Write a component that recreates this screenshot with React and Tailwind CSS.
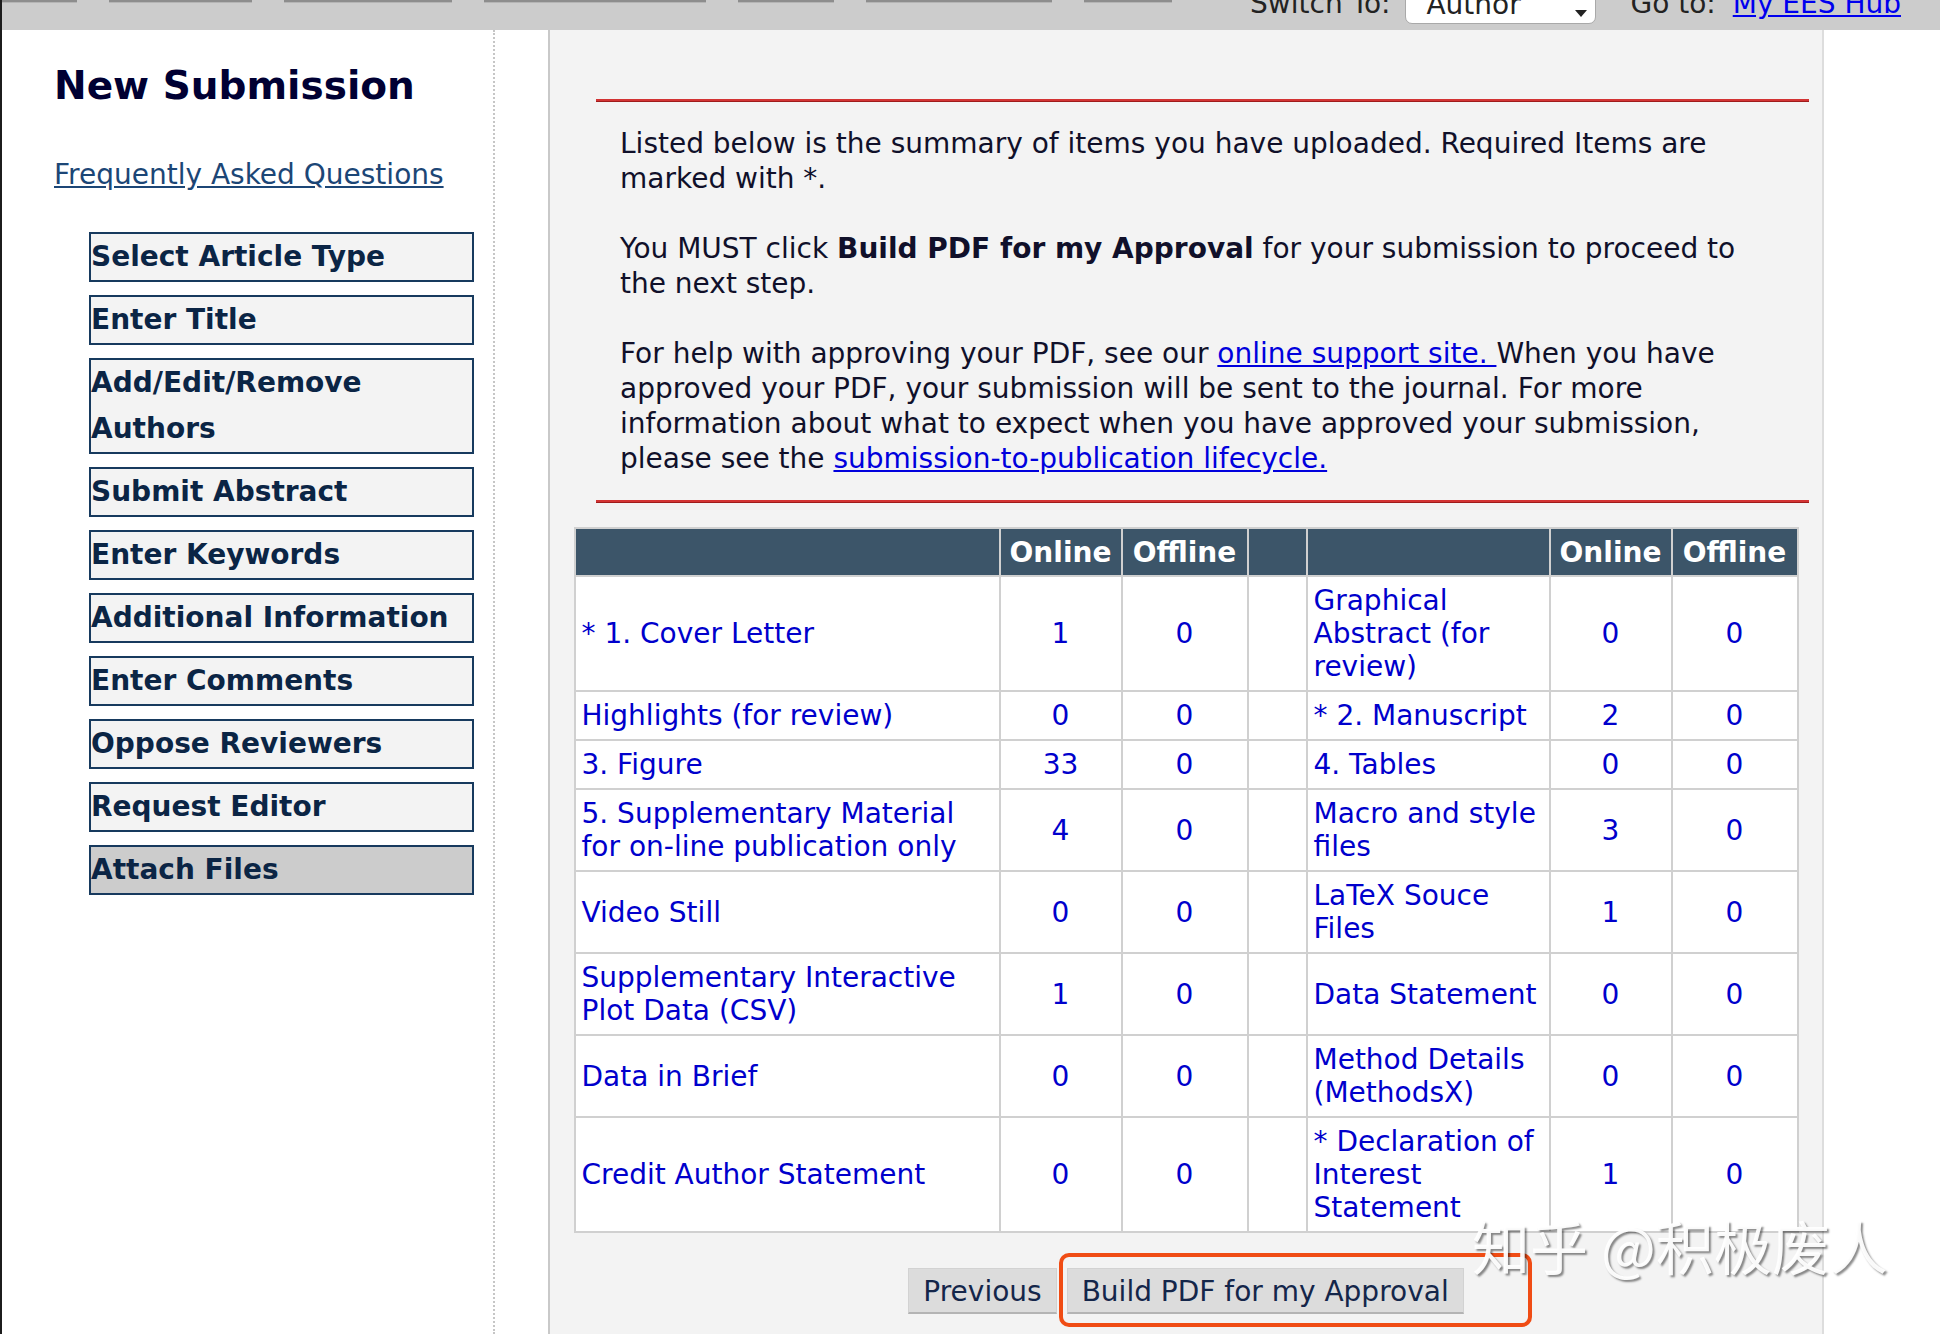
import React from 'react';

const tabWidths = ['w-[75px]', 'w-[143px]', 'w-[168px]', 'w-[222px]', 'w-[96px]', 'w-[186px]', 'w-[88px]'];

const steps = [
  'Select Article Type',
  'Enter Title',
  'Add/Edit/Remove Authors',
  'Submit Abstract',
  'Enter Keywords',
  'Additional Information',
  'Enter Comments',
  'Oppose Reviewers',
  'Request Editor',
  'Attach Files',
];

// left item, online, offline, right item, online, offline
const rows = [
  ['* 1. Cover Letter', 1, 0, 'Graphical Abstract (for review)', 0, 0],
  ['Highlights (for review)', 0, 0, '* 2. Manuscript', 2, 0],
  ['3. Figure', 33, 0, '4. Tables', 0, 0],
  ['5. Supplementary Material for on-line publication only', 4, 0, 'Macro and style files', 3, 0],
  ['Video Still', 0, 0, 'LaTeX Souce Files', 1, 0],
  ['Supplementary Interactive Plot Data (CSV)', 1, 0, 'Data Statement', 0, 0],
  ['Data in Brief', 0, 0, 'Method Details (MethodsX)', 0, 0],
  ['Credit Author Statement', 0, 0, '* Declaration of Interest Statement', 1, 0],
];

const TopBar = () => (
  <div className="flex h-[30px] overflow-hidden bg-[#cccccc] text-[28px] leading-[35px]">
    <div className="flex gap-[32px]">
      {tabWidths.map((w, i) => (
        <div key={i} className={`${w} h-[3px] border-b border-[#b5b5b5] bg-[#8d8d8d]`} />
      ))}
    </div>
    <div className="ml-auto mr-[39px] -mt-[14px] flex items-start text-[#222]">
      <span>Switch To:</span>
      <div className="ml-[15px] flex h-[38px] w-[191px] items-start justify-between rounded-b-[7px] border border-[#a9a9a9] bg-white pl-[20px] pr-[7px]">
        <span>Author</span>
        <svg className="mt-[22px]" width="14" height="9" viewBox="0 0 14 9">
          <polygon points="1,1 13,1 7,8" fill="#222" />
        </svg>
      </div>
      <span className="ml-[34px]">Go to:</span>
      <a className="ml-[17px] text-[#0000ee] underline">My EES Hub</a>
    </div>
  </div>
);

const Sidebar = () => (
  <aside className="w-[493px] shrink-0 border-r-2 border-dotted border-[#c6c6c6] pl-[52px] pt-[32px]">
    <h1 className="text-[39px] font-bold leading-[47px] text-[#000033]">New Submission</h1>
    <a className="mt-[48px] block text-[28px] leading-[35px] text-[#1c4676] underline">Frequently Asked Questions</a>
    <div className="ml-[35px] mt-[40px] flex w-[385px] flex-col gap-[13px]">
      {steps.map(step => (
        <div
          key={step}
          className={`border-2 border-[#173a5e] text-[28px] font-bold leading-[46px] text-[#0b2545] ${
            step === 'Attach Files' ? 'bg-[#cccccc]' : 'bg-[#f3f3f3]'
          }`}
        >
          {step}
        </div>
      ))}
    </div>
  </aside>
);

const RedLine = ({ className = '' }) => (
  <div className={`h-[3px] border-b border-[#9f1b1b] bg-[#d23333] ${className}`} />
);

const FilesTable = () => (
  <table className="mx-auto mt-[24px] w-[1223px] table-fixed border-collapse text-[28px] leading-[33px]">
    <colgroup>
      <col className="w-[425px]" />
      <col className="w-[122px]" />
      <col className="w-[126px]" />
      <col className="w-[59px]" />
      <col className="w-[243px]" />
      <col className="w-[122px]" />
      <col className="w-[126px]" />
    </colgroup>
    <thead>
      <tr className="bg-[#3c5569] font-bold text-white">
        <th className="border-2 border-[#d0d0d0] pb-[6px] pt-[7px]" />
        <th className="border-2 border-[#d0d0d0] pb-[6px] pt-[7px]">Online</th>
        <th className="border-2 border-[#d0d0d0] pb-[6px] pt-[7px]">Offline</th>
        <th className="border-2 border-[#d0d0d0] pb-[6px] pt-[7px]" />
        <th className="border-2 border-[#d0d0d0] pb-[6px] pt-[7px]" />
        <th className="border-2 border-[#d0d0d0] pb-[6px] pt-[7px]">Online</th>
        <th className="border-2 border-[#d0d0d0] pb-[6px] pt-[7px]">Offline</th>
      </tr>
    </thead>
    <tbody className="bg-white text-[#0000cc]">
      {rows.map(([left, lOn, lOff, right, rOn, rOff]) => (
        <tr key={left}>
          <td className="border-2 border-[#d0d0d0] px-[6px] py-[7px]">{left}</td>
          <td className="border-2 border-[#d0d0d0] py-[7px] text-center">{lOn}</td>
          <td className="border-2 border-[#d0d0d0] py-[7px] text-center">{lOff}</td>
          <td className="border-2 border-[#d0d0d0]" />
          <td className="border-2 border-[#d0d0d0] px-[6px] py-[7px]">{right}</td>
          <td className="border-2 border-[#d0d0d0] py-[7px] text-center">{rOn}</td>
          <td className="border-2 border-[#d0d0d0] py-[7px] text-center">{rOff}</td>
        </tr>
      ))}
    </tbody>
  </table>
);

const App = () => {
  return (
    <div className="relative h-[1334px] overflow-hidden border-l-2 border-[#1c1c1c] bg-white font-['DejaVu_Sans','Noto_Sans_CJK_SC',sans-serif]">
      <TopBar />
      <div className="flex h-[1304px]">
        <Sidebar />
        <main className="ml-[53px] w-[1276px] shrink-0 border-x-2 border-l-[#c9c9c9] border-r-[#dddddd] bg-[#f3f3f3] pt-[69px]">
          <div className="ml-[46px] mr-[13px]">
            <RedLine />
            <div className="mt-[24px] pl-[24px] pr-[49px] text-[28px] leading-[35px] text-[#10102a]">
              <p>Listed below is the summary of items you have uploaded. Required Items are marked with *.</p>
              <p className="mt-[35px]">
                You MUST click <b>Build PDF for my Approval</b> for your submission to proceed to the next step.
              </p>
              <p className="mt-[35px]">
                For help with approving your PDF, see our{' '}
                <a className="text-[#0000dd] underline">online support site. </a>
                When you have approved your PDF, your submission will be sent to the journal. For more information
                about what to expect when you have approved your submission, please see the{' '}
                <a className="text-[#0000dd] underline">submission-to-publication lifecycle.</a>
              </p>
            </div>
            <RedLine className="mt-[24px]" />
          </div>

          <FilesTable />

          <div className="mt-[35px] flex justify-center gap-[10px] text-[28px] leading-[35px] text-[#14264a]">
            <button className="border border-[#d2d2d2] border-b-2 border-b-[#b4b4b4] bg-[#dcdcdc] px-[14px] pb-[3px] pt-[5px]">
              Previous
            </button>
            <span className="relative">
              <button className="border border-[#d2d2d2] border-b-2 border-b-[#b4b4b4] bg-[#dcdcdc] px-[14px] pb-[3px] pt-[5px]">
                Build PDF for my Approval
              </button>
              <span className="pointer-events-none absolute -bottom-[13px] -left-[8px] -right-[68px] -top-[15px] rounded-[10px] border-4 border-[#f04c14]" />
            </span>
          </div>
        </main>
      </div>

      <div className="pointer-events-none absolute left-[1470px] top-[1216px] text-[58px] leading-none text-white/95 [text-shadow:2px_2px_2px_rgba(0,0,0,0.45)] font-['Noto_Sans_CJK_SC',sans-serif]">
        知乎 @积极废人
      </div>
    </div>
  );
};

export default App;
